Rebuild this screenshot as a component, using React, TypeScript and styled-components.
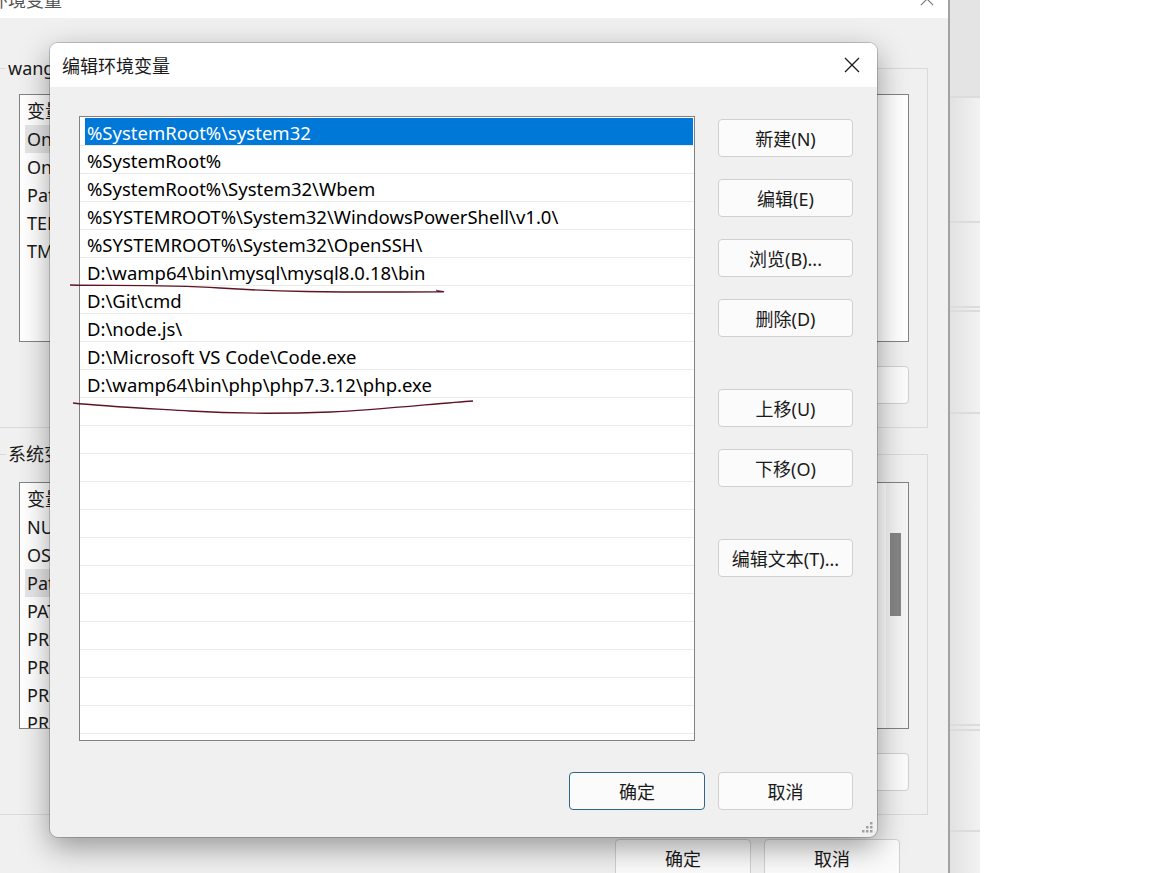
import React from "react";
import styled, { createGlobalStyle } from "styled-components";

const GlobalStyle = createGlobalStyle`
  html, body {
    margin: 0;
    padding: 0;
    background: #ffffff;
  }
  * {
    box-sizing: border-box;
  }
`;

const FONT = `"Noto Sans", "Noto Sans CJK SC", sans-serif`;

const Desktop = styled.div`
  position: relative;
  width: 1152px;
  height: 873px;
  overflow: hidden;
  background: #ffffff;
  font-family: ${FONT};
  color: #000;
`;

/* ---------- background window (环境变量) ---------- */

const ParentWindow = styled.div`
  position: absolute;
  left: -20px;
  top: -27px;
  width: 968px;
  height: 930px;
  background: #f0f0f0;
  display: flex;
  flex-direction: column;
`;

const ParentTitleBar = styled.div`
  height: 45px;
  flex: none;
  background: #ffffff;
  display: flex;
  align-items: center;
  justify-content: space-between;
  padding: 6px 14px 0 10px;
  font-size: 18px;
  color: #555;
`;

const ParentBody = styled.div`
  padding: 50px 20px 0 18px;
  display: flex;
  flex-direction: column;
`;

const Group = styled.div<{ $top: number; $height: number }>`
  position: relative;
  margin-top: ${(p) => p.$top}px;
  height: ${(p) => p.$height}px;
  border: 1px solid #dadada;
  padding: ${(p) => (p.$top > 0 ? 27 : 25)}px 18px 0 20px;
  display: flex;
  flex-direction: column;
`;

const Legend = styled.span`
  position: absolute;
  left: 7px;
  top: -13px;
  padding: 0 2px;
  background: #f0f0f0;
  font-size: 18px;
  line-height: 24px;
  color: #1a1a1a;
`;

const ParentList = styled.div<{ $height: number }>`
  height: ${(p) => p.$height}px;
  border: 1px solid #828282;
  background: #ffffff;
  display: flex;
  overflow: hidden;
`;

const ParentListCol = styled.div`
  flex: 1;
  display: flex;
  flex-direction: column;
`;

const ParentRow = styled.div<{ $active?: boolean; $head?: boolean }>`
  width: 300px;
  height: ${(p) => (p.$head ? 30 : 28)}px;
  flex: none;
  margin-left: 5px;
  padding-left: 2px;
  display: flex;
  align-items: center;
  font-size: 18px;
  white-space: nowrap;
  background: ${(p) => (p.$active ? "#e6e6e6" : "transparent")};
  color: #1a1a1a;
`;

const ScrollTrack = styled.div`
  width: 22px;
  flex: none;
  background: #f4f4f4;
  padding: 50px 0 0 4px;
`;

const ScrollThumb = styled.div`
  width: 11px;
  height: 83px;
  background: #858585;
`;

const ParentButtons = styled.div<{ $pad?: number }>`
  display: flex;
  justify-content: flex-end;
  gap: 13px;
  margin-top: 24px;
  padding-right: ${(p) => p.$pad ?? 0}px;
`;

const BackButton = styled.button`
  width: 136px;
  height: 38px;
  border: 1px solid #d0d0d0;
  border-radius: 4px;
  background: #fbfbfb;
  font-family: ${FONT};
  font-size: 18px;
  color: #1a1a1a;
`;

const BackStrip = styled.div`
  position: absolute;
  left: 948px;
  top: 0;
  width: 32px;
  height: 873px;
  border-left: 2px solid #a2a2a2;
  background: linear-gradient(to right, #e2e2e2, #f2f2f2);
  display: flex;
  flex-direction: column;
`;

const StripPart = styled.div<{ $h: number; $shade?: boolean }>`
  height: ${(p) => p.$h}px;
  flex: none;
  border-bottom: 2px solid #dcdcdc;
  background: ${(p) => (p.$shade ? "#e4e4e4" : "transparent")};
`;

/* ---------- dialog (编辑环境变量) ---------- */

const Dialog = styled.div`
  position: absolute;
  left: 50px;
  top: 43px;
  width: 827px;
  height: 794px;
  border-radius: 8px;
  background: #f0f0f0;
  box-shadow: 0 0 0 1px rgba(0, 0, 0, 0.18), 0 10px 30px rgba(0, 0, 0, 0.38);
  display: flex;
  flex-direction: column;
  overflow: hidden;
`;

const TitleBar = styled.div`
  height: 44px;
  flex: none;
  background: #ffffff;
  display: flex;
  align-items: center;
  justify-content: space-between;
  padding: 0 17px 0 12px;
  font-size: 18px;
  color: #1a1a1a;
`;

const DialogBody = styled.div`
  position: relative;
  flex: 1;
  display: grid;
  grid-template-columns: 616px 135px;
  grid-template-rows: 625px auto;
  column-gap: 23px;
  padding: 29px 24px 0 29px;
`;

const PathList = styled.div`
  border: 1px solid #828282;
  background: #ffffff;
  padding-top: 1px;
  overflow: hidden;
`;

const PathRow = styled.div`
  height: 28px;
  border-bottom: 1px solid #ebebeb;
  padding: 0 1px 0 5px;
  display: flex;
`;

const PathCell = styled.div<{ $selected?: boolean }>`
  flex: 1;
  height: 27px;
  padding: 1px 0 0 2px;
  line-height: 27px;
  font-size: 18.5px;
  white-space: nowrap;
  background: ${(p) => (p.$selected ? "#0078d7" : "transparent")};
  color: ${(p) => (p.$selected ? "#ffffff" : "#000000")};
`;

const SideButtons = styled.div`
  display: flex;
  flex-direction: column;
  padding-top: 3px;
`;

const Button = styled.button<{ $space?: number; $default?: boolean; $w?: number }>`
  width: ${(p) => p.$w ?? 135}px;
  height: 38px;
  margin-top: ${(p) => p.$space ?? 0}px;
  border: 1px solid ${(p) => (p.$default ? "#2f6688" : "#d0d0d0")};
  border-radius: 4px;
  background: #fbfbfb;
  font-family: ${FONT};
  font-size: 18px;
  color: #1a1a1a;
  padding: 0;
`;

const Footer = styled.div`
  grid-column: 1 / -1;
  display: flex;
  justify-content: flex-end;
  gap: 13px;
  margin-top: 31px;
`;

const Marks = styled.svg`
  position: absolute;
  left: 0;
  top: -44px;
  pointer-events: none;
`;

const Grip = styled.svg`
  position: absolute;
  right: 4px;
  bottom: 4px;
`;

const CloseIcon = ({ size, color }: { size: number; color: string }) => (
  <svg width={size} height={size} viewBox="0 0 16 16">
    <path d="M1 1 L15 15 M15 1 L1 15" stroke={color} strokeWidth="1.3" fill="none" />
  </svg>
);

const paths = [
  "%SystemRoot%\\system32",
  "%SystemRoot%",
  "%SystemRoot%\\System32\\Wbem",
  "%SYSTEMROOT%\\System32\\WindowsPowerShell\\v1.0\\",
  "%SYSTEMROOT%\\System32\\OpenSSH\\",
  "D:\\wamp64\\bin\\mysql\\mysql8.0.18\\bin",
  "D:\\Git\\cmd",
  "D:\\node.js\\",
  "D:\\Microsoft VS Code\\Code.exe",
  "D:\\wamp64\\bin\\php\\php7.3.12\\php.exe",
];

const rows = [...paths, ...Array(13).fill("")];

const userVars = ["OneDrive", "OneDriveConsumer", "Path", "TEMP", "TMP"];
const sysVars = [
  "NUMBER_OF_PROCESSORS",
  "OS",
  "Path",
  "PATHEXT",
  "PROCESSOR_ARCHITECTURE",
  "PROCESSOR_IDENTIFIER",
  "PROCESSOR_LEVEL",
  "PROCESSOR_REVISION",
];

export default function App() {
  return (
    <Desktop>
      <GlobalStyle />

      <ParentWindow>
        <ParentTitleBar>
          <span>环境变量</span>
          <CloseIcon size={14} color="#777" />
        </ParentTitleBar>
        <ParentBody>
          <Group $top={0} $height={360}>
            <Legend>wang 的用户变量(U)</Legend>
            <ParentList $height={248}>
              <ParentListCol>
                <ParentRow $head>变量</ParentRow>
                {userVars.map((v, i) => (
                  <ParentRow key={v} $active={i === 0}>
                    {v}
                  </ParentRow>
                ))}
              </ParentListCol>
            </ParentList>
            <ParentButtons>
              <BackButton>新建(N)...</BackButton>
              <BackButton>编辑(E)...</BackButton>
              <BackButton>删除(D)</BackButton>
            </ParentButtons>
          </Group>
          <Group $top={26} $height={361}>
            <Legend>系统变量(S)</Legend>
            <ParentList $height={247}>
              <ParentListCol>
                <ParentRow $head>变量</ParentRow>
                {sysVars.map((v) => (
                  <ParentRow key={v} $active={v === "Path"}>
                    {v}
                  </ParentRow>
                ))}
              </ParentListCol>
              <ScrollTrack>
                <ScrollThumb />
              </ScrollTrack>
            </ParentList>
            <ParentButtons>
              <BackButton>新建(W)...</BackButton>
              <BackButton>编辑(I)...</BackButton>
              <BackButton>删除(L)</BackButton>
            </ParentButtons>
          </Group>
          <ParentButtons $pad={28}>
            <BackButton>确定</BackButton>
            <BackButton>取消</BackButton>
          </ParentButtons>
        </ParentBody>
      </ParentWindow>

      <BackStrip>
        <StripPart $h={98} $shade />
        <StripPart $h={125} />
        <StripPart $h={85} />
        <StripPart $h={4} />
        <StripPart $h={102} />
        <StripPart $h={312} />
        <StripPart $h={5} />
        <StripPart $h={101} />
      </BackStrip>

      <Dialog>
        <TitleBar>
          <span>编辑环境变量</span>
          <CloseIcon size={16} color="#1a1a1a" />
        </TitleBar>
        <DialogBody>
          <PathList>
            {rows.map((p, i) => (
              <PathRow key={i}>
                <PathCell $selected={i === 0}>{p}</PathCell>
              </PathRow>
            ))}
          </PathList>
          <SideButtons>
            <Button>新建(N)</Button>
            <Button $space={22}>编辑(E)</Button>
            <Button $space={22}>浏览(B)...</Button>
            <Button $space={22}>删除(D)</Button>
            <Button $space={52}>上移(U)</Button>
            <Button $space={22}>下移(O)</Button>
            <Button $space={52}>编辑文本(T)...</Button>
          </SideButtons>
          <Footer>
            <Button $default $w={136}>确定</Button>
            <Button>取消</Button>
          </Footer>
          <Marks width={827} height={794} viewBox="0 0 827 794">
            <path
              d="M20,242 C60,243 110,241 170,245 S280,249 350,249 S384,249 387,247"
              stroke="#5e1424"
              strokeWidth="1.3"
              fill="none"
            />
            <path
              d="M23,360 C50,363 90,365 140,368 S230,371 280,369 S390,360 423,358"
              stroke="#5e1424"
              strokeWidth="1.3"
              fill="none"
            />
          </Marks>
        </DialogBody>
        <Grip width={11} height={11} viewBox="0 0 11 11">
          {[
            [8, 0],
            [8, 4],
            [4, 4],
            [8, 8],
            [4, 8],
            [0, 8],
          ].map(([x, y], i) => (
            <rect key={i} x={x} y={y} width={2.5} height={2.5} fill="#a0a0a0" />
          ))}
        </Grip>
      </Dialog>
    </Desktop>
  );
}
